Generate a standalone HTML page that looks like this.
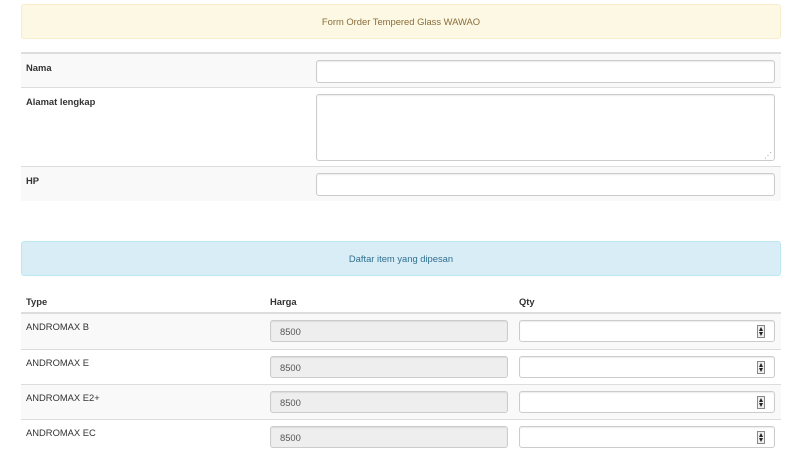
<!DOCTYPE html>
<html><head><style>
*{box-sizing:border-box;margin:0;padding:0}
body{width:811px;height:454px;background:#fff;font-family:"Liberation Sans",Arial,sans-serif;font-size:9.4px;color:#333;position:relative;overflow:hidden}
.a{position:absolute;left:21px;width:760px;border:1px solid;border-radius:3px;text-align:center}
.y{top:4px;height:35px;background:#fcf8e3;border-color:#faebcc;color:#8a6d3b;line-height:34px}
.b{top:241px;height:35px;background:#d9edf7;border-color:#bce8f1;color:#31708f;line-height:34px}
.r{position:absolute;left:21px;width:760px;border-top:1px solid #ddd}
.g{background:#f9f9f9}
.l{position:absolute;left:5px;top:8px;font-weight:bold}
.n{position:absolute;left:5px;top:7px}
.i{position:absolute;border:1px solid #ccc;border-radius:3px;background:#fff;box-shadow:inset 0 1px 1px rgba(0,0,0,.075)}
.d{background:#eee;color:#555;padding-left:9px;line-height:22px}
.s{position:absolute;right:9px;top:4px;width:8px;height:13px;border:1px solid #888;background:#eee}
.s:before{content:"";position:absolute;left:1px;top:1px;border:2px solid transparent;border-bottom:4px solid #222;border-top:0}
.s:after{content:"";position:absolute;left:1px;bottom:1px;border:2px solid transparent;border-top:4px solid #222;border-bottom:0}
</style></head><body>
<div class="a y">Form Order Tempered Glass WAWAO</div>
<div class="r g" style="top:52px;height:35px;border-top:2px solid #ddd"><span class="l">Nama</span><div class="i" style="left:295px;top:6px;width:459px;height:23px"></div></div>
<div class="r" style="top:87px;height:79px"><span class="l">Alamat lengkap</span><div class="i" style="left:295px;top:6px;width:459px;height:67px"><span style="position:absolute;right:2px;bottom:0;color:#999;font-size:8px">⋰</span></div></div>
<div class="r g" style="top:166px;height:35px"><span class="l">HP</span><div class="i" style="left:295px;top:6px;width:459px;height:23px"></div></div>
<div class="a b">Daftar item yang dipesan</div>
<div style="position:absolute;left:21px;width:760px;top:290px;height:24px;border-bottom:2px solid #ddd;font-weight:bold"><span style="position:absolute;left:5px;top:6px">Type</span><span style="position:absolute;left:249px;top:6px">Harga</span><span style="position:absolute;left:498px;top:6px">Qty</span></div>
<div class="r g" style="top:314px;height:35px;border-top:0"><span class="n">ANDROMAX B</span><div class="i d" style="left:249px;top:6px;width:238px;height:22px">8500</div><div class="i" style="left:498px;top:6px;width:256px;height:22px"><span class="s"></span></div></div>
<div class="r" style="top:349px;height:35px"><span class="n">ANDROMAX E</span><div class="i d" style="left:249px;top:6px;width:238px;height:22px">8500</div><div class="i" style="left:498px;top:6px;width:256px;height:22px"><span class="s"></span></div></div>
<div class="r g" style="top:384px;height:35px"><span class="n">ANDROMAX E2+</span><div class="i d" style="left:249px;top:6px;width:238px;height:22px">8500</div><div class="i" style="left:498px;top:6px;width:256px;height:22px"><span class="s"></span></div></div>
<div class="r" style="top:419px;height:35px"><span class="n">ANDROMAX EC</span><div class="i d" style="left:249px;top:6px;width:238px;height:22px">8500</div><div class="i" style="left:498px;top:6px;width:256px;height:22px"><span class="s"></span></div></div>
</body></html>
